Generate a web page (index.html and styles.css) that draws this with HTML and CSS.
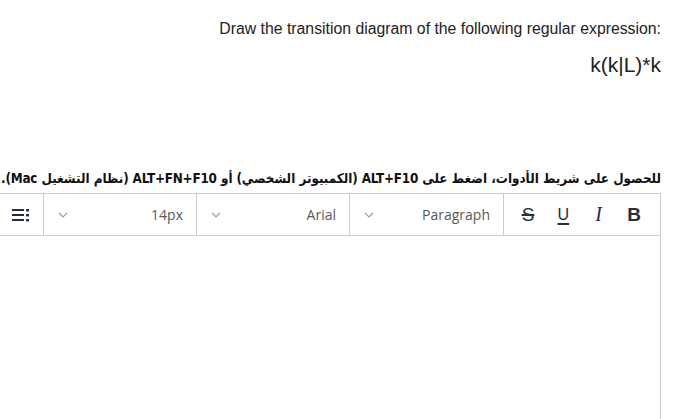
FILE: index.html
```html
<!DOCTYPE html>
<html lang="ar">
<head>
<meta charset="utf-8">
<link rel="stylesheet" href="styles.css">
</head>
<body>
<div class="page">
  <div class="question">
    <p class="q-line">Draw the transition diagram of the following regular expression:</p>
    <p class="q-expr">k(k|L)*k</p>
  </div>
  <p class="hint" dir="rtl">للحصول على شريط الأدوات، اضغط على ALT+F10 (الكمبيوتر الشخصي) أو ALT+FN+F10 (نظام التشغيل Mac).</p>
  <div class="editor" dir="rtl">
    <div class="toolbar">
      <div class="group fmt">
        <span class="btn b">B</span>
        <span class="btn i">I</span>
        <span class="btn u">U</span>
        <span class="btn s">S</span>
      </div>
      <div class="group dd w-para"><span class="lbl">Paragraph</span><svg class="chev" width="10" height="6" viewBox="0 0 10 6"><path d="M1 1l4 4 4-4" fill="none" stroke="#999" stroke-width="1.1"/></svg></div>
      <div class="group dd w-font"><span class="lbl">Arial</span><svg class="chev" width="10" height="6" viewBox="0 0 10 6"><path d="M1 1l4 4 4-4" fill="none" stroke="#999" stroke-width="1.1"/></svg></div>
      <div class="group dd w-size"><span class="lbl">14px</span><svg class="chev" width="10" height="6" viewBox="0 0 10 6"><path d="M1 1l4 4 4-4" fill="none" stroke="#999" stroke-width="1.1"/></svg></div>
      <div class="group more">
        <svg width="20" height="14" viewBox="0 0 20 14">
          <rect x="1" y="1" width="12" height="2" fill="#222f3e"/>
          <rect x="1" y="6" width="12" height="2" fill="#222f3e"/>
          <rect x="1" y="11" width="12" height="2" fill="#222f3e"/>
          <rect x="15" y="1" width="3" height="2.4" fill="#222f3e"/>
          <rect x="15" y="6" width="3" height="2.4" fill="#222f3e"/>
          <rect x="15" y="11" width="3" height="2.4" fill="#222f3e"/>
        </svg>
      </div>
    </div>
    <div class="content"></div>
  </div>
</div>
</body>
</html>
```
FILE: styles.css
```css
html, body {
  margin: 0;
  padding: 0;
  background: #fff;
}
.page {
  width: 661px;
  font-family: "Liberation Sans", Arial, sans-serif;
}
.question {
  text-align: right;
  color: #222;
  padding-top: 19px;
}
.q-line {
  margin: 0;
  font-size: 15.8px;
  line-height: 20px;
}
.q-expr {
  margin: 14px 0 0;
  font-size: 21px;
  line-height: 24px;
}
.hint {
  margin: 93px 0 0;
  font-family: "DejaVu Sans Condensed", "DejaVu Sans", sans-serif;
  font-weight: bold;
  font-stretch: condensed;
  font-size: 13.35px;
  letter-spacing: -0.2px;
  line-height: 18px;
  color: #111;
  text-align: right;
  white-space: nowrap;
}
.editor {
  margin-top: 5px;
  margin-left: -10px;
  border: 1px solid #ccc;
  border-left: none;
  height: 240px;
}
.toolbar {
  display: flex;
  height: 41px;
  border-bottom: 1px solid #ccc;
  font-family: "Open Sans", "Noto Sans", sans-serif;
}
.group {
  display: flex;
  align-items: center;
  border-left: 1px solid #ccc;
}
.fmt {
  width: 157px;
  justify-content: space-between;
  padding: 0 12px 0 10px;
  box-sizing: border-box;
}
.btn {
  width: 28px;
  text-align: center;
  color: #222f3e;
  font-size: 19px;
}
.btn.b { font-family: "Liberation Sans", sans-serif; font-weight: bold; }
.btn.i { font-family: "Liberation Serif", serif; font-style: italic; font-size: 20px; }
.btn.u { font-family: "Liberation Sans", sans-serif; font-size: 16px; text-decoration: underline; text-underline-offset: 3px; text-decoration-thickness: 2px; }
.btn.s { font-family: "Liberation Sans", sans-serif; font-size: 19px; text-decoration: line-through; text-decoration-thickness: 2px; }
.dd {
  justify-content: space-between;
  padding: 0 13px 0 14px;
  box-sizing: border-box;
  color: #595959;
  font-size: 14px;
}
.w-para { width: 154px; }
.w-font { width: 153px; }
.w-size { width: 153px; }
.more {
  border-left: none;
  width: 53px;
  justify-content: flex-start;
  padding-right: 12px;
  box-sizing: border-box;
}
.content {
  height: 198px;
}
```
